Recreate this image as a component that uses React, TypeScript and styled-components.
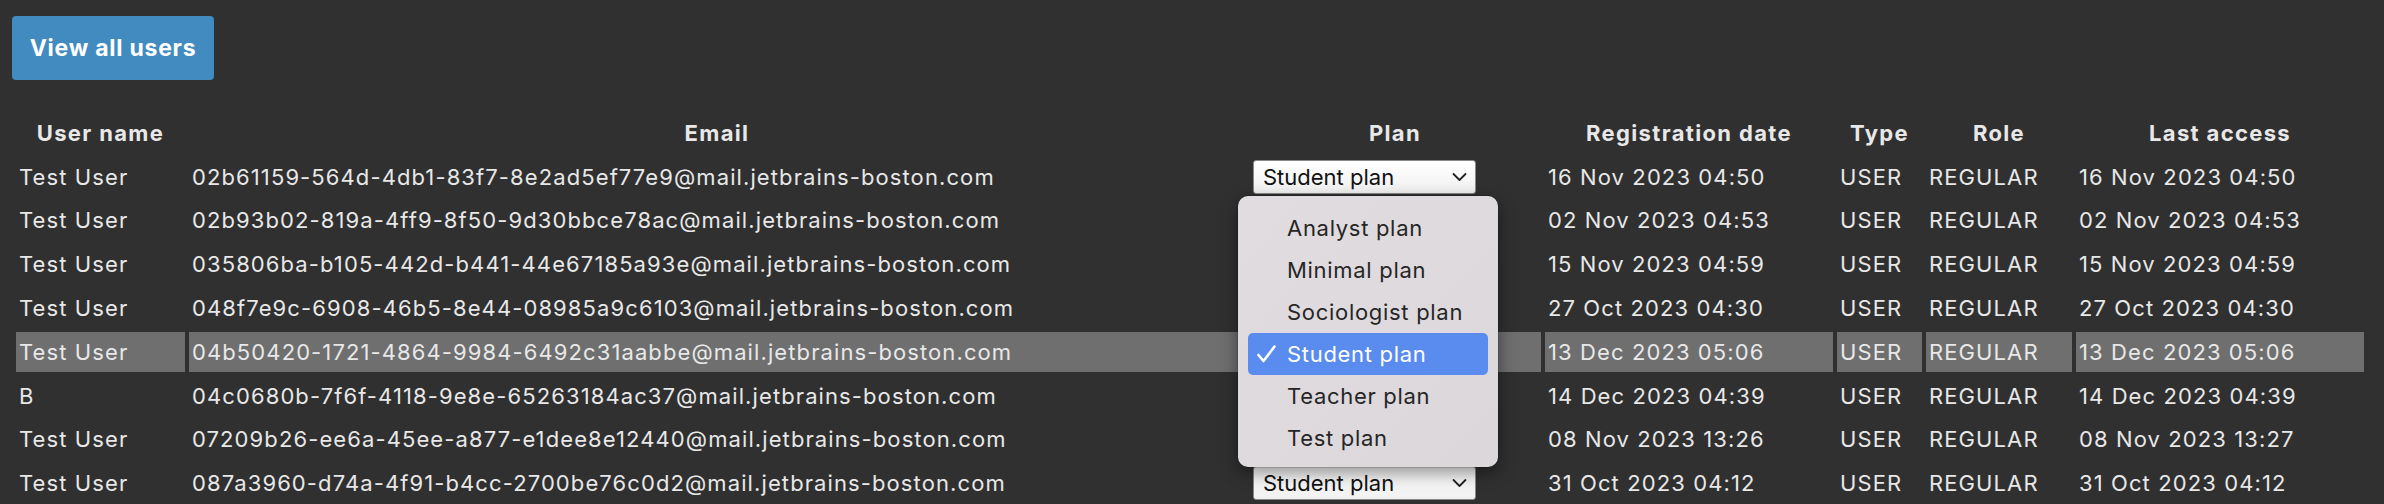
import React from "react";
import styled, { createGlobalStyle } from "styled-components";

const GlobalStyle = createGlobalStyle`
  html, body {
    margin: 0;
    padding: 0;
    background: #303030;
  }
  body {
    font-family: Inter, "Noto Sans", "Liberation Sans", sans-serif;
    color: #e8e8e8;
  }
`;

const Page = styled.div`
  padding: 16px 16px 0 12px;
  min-height: 504px;
  box-sizing: border-box;
`;

const PrimaryButton = styled.button`
  display: block;
  width: 202px;
  height: 64px;
  border: none;
  border-radius: 4px;
  background: #418bc0;
  color: #ffffff;
  font-family: inherit;
  font-weight: 700;
  font-size: 23px;
  letter-spacing: 0.75px;
  cursor: pointer;
`;

const Table = styled.table`
  margin-top: 29px;
  width: 100%;
  table-layout: fixed;
  border-collapse: separate;
  border-spacing: 4px 4px;
  font-size: 22px;
  letter-spacing: 1.1px;
`;

const HeadCell = styled.th`
  height: 39.8px;
  padding: 0 2px;
  font-weight: 700;
  letter-spacing: 1.35px;
  text-align: center;
  white-space: nowrap;
  color: #e8e8e8;
`;

const Row = styled.tr<{ $active?: boolean }>`
  td {
    background: ${(p) => (p.$active ? "#6f6f6f" : "transparent")};
  }
`;

const Cell = styled.td`
  height: 39.8px;
  padding: 0 2px 0 3px;
  white-space: nowrap;
  overflow: visible;
  vertical-align: middle;
`;

const SelectWrap = styled.div`
  position: relative;
  margin-left: 1px;
  width: 223px;
  letter-spacing: 0;
`;

const SelectBox = styled.div`
  display: flex;
  align-items: center;
  justify-content: space-between;
  box-sizing: border-box;
  width: 223px;
  height: 34px;
  padding: 0 8px 0 9px;
  border: 1px solid #8a8a8a;
  border-radius: 3px;
  background: linear-gradient(#ffffff, #f1f1f1);
  color: #111111;
  font-size: 22px;
`;

const Chevron = styled.svg`
  width: 15px;
  height: 10px;
  flex: none;
`;

const Menu = styled.div`
  position: absolute;
  z-index: 10;
  top: calc(100% + 2px);
  left: -15px;
  width: 260px;
  box-sizing: border-box;
  padding: 11px 10px 8px;
  border-radius: 10px;
  background: linear-gradient(135deg, #e0dce0, #dbd7db);
  box-shadow: 0 0 0 0.5px rgba(0, 0, 0, 0.25), 0 6px 18px rgba(0, 0, 0, 0.45);
  display: flex;
  flex-direction: column;
  letter-spacing: 0.7px;
`;

const MenuItem = styled.div<{ $selected?: boolean }>`
  display: flex;
  align-items: center;
  height: 42px;
  padding-left: 9px;
  border-radius: 5px;
  font-size: 22px;
  color: ${(p) => (p.$selected ? "#ffffff" : "#262626")};
  background: ${(p) => (p.$selected ? "#5a8cf0" : "transparent")};
`;

const Check = styled.span`
  display: inline-flex;
  align-items: center;
  width: 30px;
  flex: none;
`;

const plans = [
  "Analyst plan",
  "Minimal plan",
  "Sociologist plan",
  "Student plan",
  "Teacher plan",
  "Test plan",
];

const users = [
  ["Test User", "02b61159-564d-4db1-83f7-8e2ad5ef77e9@mail.jetbrains-boston.com", "16 Nov 2023 04:50", "16 Nov 2023 04:50"],
  ["Test User", "02b93b02-819a-4ff9-8f50-9d30bbce78ac@mail.jetbrains-boston.com", "02 Nov 2023 04:53", "02 Nov 2023 04:53"],
  ["Test User", "035806ba-b105-442d-b441-44e67185a93e@mail.jetbrains-boston.com", "15 Nov 2023 04:59", "15 Nov 2023 04:59"],
  ["Test User", "048f7e9c-6908-46b5-8e44-08985a9c6103@mail.jetbrains-boston.com", "27 Oct 2023 04:30", "27 Oct 2023 04:30"],
  ["Test User", "04b50420-1721-4864-9984-6492c31aabbe@mail.jetbrains-boston.com", "13 Dec 2023 05:06", "13 Dec 2023 05:06"],
  ["B", "04c0680b-7f6f-4118-9e8e-65263184ac37@mail.jetbrains-boston.com", "14 Dec 2023 04:39", "14 Dec 2023 04:39"],
  ["Test User", "07209b26-ee6a-45ee-a877-e1dee8e12440@mail.jetbrains-boston.com", "08 Nov 2023 13:26", "08 Nov 2023 13:27"],
  ["Test User", "087a3960-d74a-4f91-b4cc-2700be76c0d2@mail.jetbrains-boston.com", "31 Oct 2023 04:12", "31 Oct 2023 04:12"],
];

const colWidths = [169, 1056, 292, 288, 85, 146, 288];
const headers = ["User name", "Email", "Plan", "Registration date", "Type", "Role", "Last access"];

function PlanSelect({ open }: { open?: boolean }) {
  return (
    <SelectWrap>
      <SelectBox>
        <span>Student plan</span>
        <Chevron viewBox="0 0 15 10">
          <path d="M1.5 2 L7.5 8 L13.5 2" fill="none" stroke="#222" strokeWidth="1.8" strokeLinecap="round" strokeLinejoin="round" />
        </Chevron>
      </SelectBox>
      {open && (
        <Menu>
          {plans.map((p) => (
            <MenuItem key={p} $selected={p === "Student plan"}>
              <Check>
                {p === "Student plan" && (
                  <svg width="19" height="18" viewBox="0 0 19 18">
                    <path d="M1.5 10 L6.5 16 L17.5 1.5" fill="none" stroke="#fff" strokeWidth="2.6" strokeLinecap="round" strokeLinejoin="round" />
                  </svg>
                )}
              </Check>
              {p}
            </MenuItem>
          ))}
        </Menu>
      )}
    </SelectWrap>
  );
}

export default function App() {
  return (
    <>
      <GlobalStyle />
      <Page>
        <PrimaryButton>View all users</PrimaryButton>
        <Table>
          <colgroup>
            {colWidths.map((w, i) => (
              <col key={i} style={{ width: w }} />
            ))}
          </colgroup>
          <thead>
            <tr>
              {headers.map((h) => (
                <HeadCell key={h}>{h}</HeadCell>
              ))}
            </tr>
          </thead>
          <tbody>
            {users.map((u, i) => (
              <Row key={u[1]} $active={i === 4}>
                <Cell>{u[0]}</Cell>
                <Cell>{u[1]}</Cell>
                <Cell>
                  <PlanSelect open={i === 0} />
                </Cell>
                <Cell>{u[2]}</Cell>
                <Cell>USER</Cell>
                <Cell>REGULAR</Cell>
                <Cell>{u[3]}</Cell>
              </Row>
            ))}
          </tbody>
        </Table>
      </Page>
    </>
  );
}
